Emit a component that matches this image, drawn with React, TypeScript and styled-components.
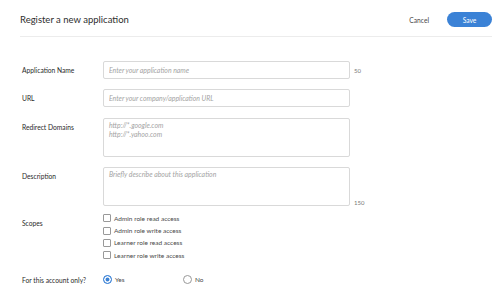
import styled, { createGlobalStyle } from "styled-components";

const scopes = [
  "Admin role read access",
  "Admin role write access",
  "Learner role read access",
  "Learner role write access",
];

export default function App() {
  return (
    <>
      <GlobalStyle />
      <Page>
        <Header>
          <Title>Register a new application</Title>
          <Actions>
            <CancelButton>Cancel</CancelButton>
            <SaveButton>Save</SaveButton>
          </Actions>
        </Header>
        <Form>
          <Row>
            <Label>Application Name</Label>
            <TextInput placeholder="Enter your application name" />
            <Counter>50</Counter>
          </Row>
          <Row $mt={10}>
            <Label>URL</Label>
            <TextInput placeholder="Enter your company/application URL" />
          </Row>
          <Row $mt={11}>
            <Label>Redirect Domains</Label>
            <TextArea placeholder={"http://*.google.com\nhttp://*.yahoo.com"} />
          </Row>
          <Row $mt={10}>
            <Label>Description</Label>
            <TextArea placeholder="Briefly describe about this application" />
            <Counter $bottom>150</Counter>
          </Row>
          <Row $mt={6}>
            <Label $offset={2}>Scopes</Label>
            <CheckList>
              {scopes.map((scope) => (
                <CheckItem key={scope}>
                  <CheckBox />
                  {scope}
                </CheckItem>
              ))}
            </CheckList>
          </Row>
          <Row $mt={13}>
            <Label $offset={-4}>For this account only?</Label>
            <RadioGroup>
              <RadioItem>
                <Radio $checked />
                Yes
              </RadioItem>
              <RadioItem>
                <Radio />
                No
              </RadioItem>
            </RadioGroup>
          </Row>
        </Form>
      </Page>
    </>
  );
}

const GlobalStyle = createGlobalStyle`
  body {
    margin: 0;
    background: #fff;
    font-family: Lato, "Liberation Sans", sans-serif;
    color: #333;
  }
`;

const Page = styled.main`
  width: 500px;
  height: 296px;
  padding: 0 8px 0 20px;
  box-sizing: border-box;
`;

const Header = styled.header`
  display: flex;
  justify-content: space-between;
  align-items: center;
  height: 37px;
  padding-top: 3px;
  box-sizing: border-box;
  border-bottom: 1.5px solid #ececec;
`;

const Title = styled.h1`
  margin: 0;
  font-size: 9.5px;
  font-weight: 400;
  color: #2e2e2e;
`;

const Actions = styled.div`
  display: flex;
  align-items: center;
  gap: 18px;
`;

const CancelButton = styled.button`
  border: none;
  background: none;
  padding: 0;
  font-family: inherit;
  font-size: 6.7px;
  color: #4a4a4a;
`;

const SaveButton = styled.button`
  width: 45px;
  height: 15px;
  border: none;
  border-radius: 8px;
  background: #3b82d6;
  color: #fff;
  font-family: inherit;
  font-size: 6.7px;
  padding: 0;
`;

const Form = styled.form`
  display: flex;
  flex-direction: column;
  padding: 24px 0 0 2px;
`;

const Row = styled.div<{ $mt?: number }>`
  display: flex;
  align-items: flex-start;
  margin-top: ${(p) => p.$mt ?? 0}px;
`;

const Label = styled.label<{ $offset?: number }>`
  width: 81px;
  flex-shrink: 0;
  line-height: 18px;
  margin-top: ${(p) => p.$offset ?? 0}px;
  font-size: 6.7px;
  color: #2a2a2a;
`;

const fieldBase = `
  width: 247px;
  box-sizing: border-box;
  border: 1px solid #d9d9d9;
  border-radius: 2px;
  background: #fff;
  font-family: Lato, "Liberation Sans", sans-serif;
  font-size: 6.9px;
  color: #333;
  outline: none;

  &::placeholder {
    color: #a3a3a3;
    font-style: italic;
  }
`;

const TextInput = styled.input`
  ${fieldBase}
  height: 18px;
  padding: 0 5px;
`;

const TextArea = styled.textarea`
  ${fieldBase}
  height: 39px;
  padding: 2px 5px;
  line-height: 9px;
  resize: none;
`;

const Counter = styled.span<{ $bottom?: boolean }>`
  align-self: ${(p) => (p.$bottom ? "flex-end" : "center")};
  margin-left: 4px;
  font-size: 6px;
  color: #777;
  line-height: ${(p) => (p.$bottom ? "8px" : "normal")};
  margin-bottom: ${(p) => (p.$bottom ? "-1px" : "0")};
`;

const CheckList = styled.div`
  display: flex;
  flex-direction: column;
`;

const CheckItem = styled.label`
  display: flex;
  align-items: center;
  gap: 3px;
  height: 12.4px;
  font-size: 6.5px;
  color: #4a4a4a;
`;

const CheckBox = styled.span`
  width: 8px;
  height: 8px;
  box-sizing: border-box;
  border: 1px solid #999;
  border-radius: 1px;
  background: #fff;
`;

const RadioGroup = styled.div`
  display: flex;
  height: 10px;
  align-items: center;
`;

const RadioItem = styled.label`
  display: flex;
  align-items: center;
  gap: 3px;
  width: 80px;
  font-size: 6.5px;
  color: #4a4a4a;
`;

const Radio = styled.span<{ $checked?: boolean }>`
  width: 9px;
  height: 9px;
  box-sizing: border-box;
  border-radius: 50%;
  border: 1px solid ${(p) => (p.$checked ? "#3b82d6" : "#999")};
  background: ${(p) => (p.$checked ? "#3b82d6" : "#fff")};
  box-shadow: ${(p) => (p.$checked ? "inset 0 0 0 1.5px #fff" : "none")};
`;
